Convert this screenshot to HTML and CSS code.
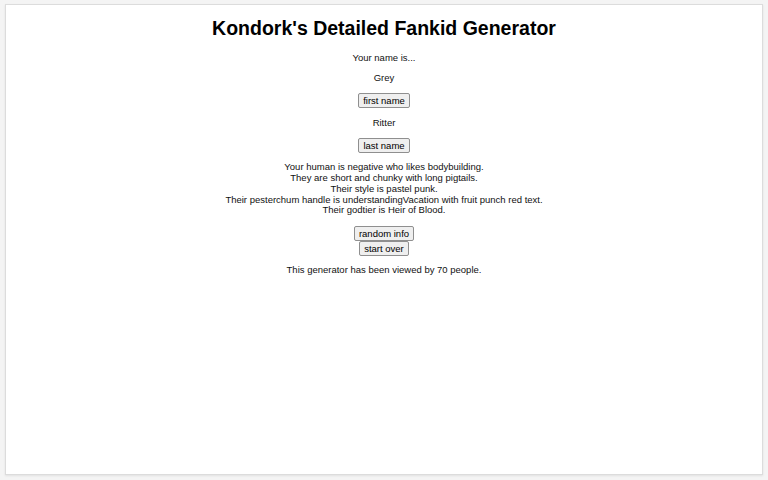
FILE: index.html
```html
<!DOCTYPE html>
<html lang="en">
<head>
    <meta charset="UTF-8">
    <meta name="viewport" content="width=device-width, initial-scale=1.0">
    <title>Kondork's Detailed Fankid Generator</title>
    <link rel="stylesheet" href="styles.css">
</head>
<body>

    <!-- Generator Card -->
    <div class="card">
        <h1>Kondork's Detailed Fankid Generator</h1>

        <p>Your name is...</p>
        <p id="first">Grey</p>
        <button onclick="pick('first')">first name</button>
        <p id="last">Ritter</p>
        <button onclick="pick('last')">last name</button>

        <!-- Random Info -->
        <p id="info">
            Your human is negative who likes bodybuilding.<br>
            They are short and chunky with long pigtails.<br>
            Their style is pastel punk.<br>
            Their pesterchum handle is understandingVacation with fruit punch red text.<br>
            Their godtier is Heir of Blood.
        </p>
        <button>random info</button><br>
        <button>start over</button>

        <p>This generator has been viewed by 70 people.</p>
    </div>

    <script>
        function pick(id) {
            // placeholder, names are fixed for now
        }
    </script>
</body>
</html>
```

FILE: styles.css
```css
html, body {
    height: 100%;
}
body {
    font-family: "Liberation Sans", Arial, sans-serif;
    font-size: 9.5px;
    line-height: 10.75px;
    margin: 0;
    padding: 4px 5px 5px 5px;
    box-sizing: border-box;
    background-color: #f4f4f4;
    color: #111;
}

/* Card */
.card {
    height: 100%;
    box-sizing: border-box;
    background: white;
    border: 1px solid #dcdcdc;
    box-shadow: 0 1px 2px rgba(0, 0, 0, 0.08);
    text-align: center;
    padding: 1px 10px;
}

h1 {
    font-size: 19.5px;
    line-height: 22px;
    color: #000;
    margin: 11px 0 13.5px;
}
p {
    margin: 9.5px 0;
}

button {
    font-family: "Liberation Sans", Arial, sans-serif;
    font-size: 9.5px;
    color: #000;
    background: #efefef;
    border: 1px solid #8f8f8f;
    border-radius: 2px;
    padding: 1px 4px;
}
```
